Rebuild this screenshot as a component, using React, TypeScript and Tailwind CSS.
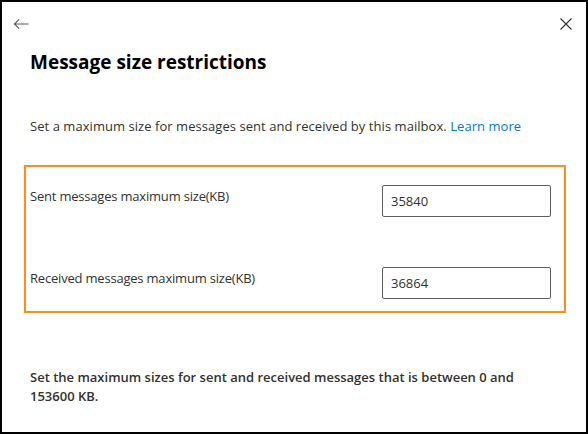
import React from 'react';

const fields = [
  { label: 'Sent messages maximum size(KB)', value: '35840' },
  { label: 'Received messages maximum size(KB)', value: '36864' },
];

export default function App() {
  return (
    <div
      className="w-[588px] h-[434px] border-2 border-black bg-white text-[#323130] overflow-hidden"
      style={{ fontFamily: '"Open Sans", "Noto Sans", sans-serif' }}
    >
      <div className="flex items-center justify-between h-[44px] pl-[11px] pr-[12px]">
        <button className="w-4 h-4 flex items-center justify-center text-[#605e5c]">
          <svg width="17" height="12" viewBox="0 0 17 12" fill="none" stroke="currentColor" strokeWidth="1.2">
            <path d="M16.5 6H1.5M6.5 1L1.5 6l5 5" />
          </svg>
        </button>
        <button className="w-4 h-4 flex items-center justify-center text-[#323130]">
          <svg width="12" height="12" viewBox="0 0 12 12" fill="none" stroke="currentColor" strokeWidth="1.1">
            <path d="M0.5 0.5l11 11M11.5 0.5l-11 11" />
          </svg>
        </button>
      </div>

      <h1 className="mt-[2px] pl-[28px] text-[19px] leading-[28px] font-bold text-black">
        Message size restrictions
      </h1>

      <p className="mt-[40px] pl-[28px] text-[13px] leading-[20px] tracking-[0.05px]">
        Set a maximum size for messages sent and received by this mailbox.{' '}
        <a href="#" className="text-[#0078d4]">Learn more</a>
      </p>

      <div className="ml-[22px] mt-[29px] w-[542px] h-[148px] border-2 border-[#ff8c1a] pt-[18px] pl-[4px] pr-[13px] flex flex-col gap-[50px]">
        {fields.map((f) => (
          <div key={f.label} className="flex items-start justify-between">
            <label className="text-[13px] leading-[20px] mt-px tracking-[-0.2px]">{f.label}</label>
            <input
              readOnly
              value={f.value}
              className="w-[169px] h-[32px] border border-[#605e5c] rounded-[2px] px-[8px] text-[13px] text-[#323130] outline-none"
              style={{ fontFamily: 'inherit' }}
            />
          </div>
        ))}
      </div>

      <p className="mt-[55px] pl-[28px] w-[540px] text-[13px] leading-[19px] font-semibold">
        Set the maximum sizes for sent and received messages that is between 0 and 153600 KB.
      </p>
    </div>
  );
}
